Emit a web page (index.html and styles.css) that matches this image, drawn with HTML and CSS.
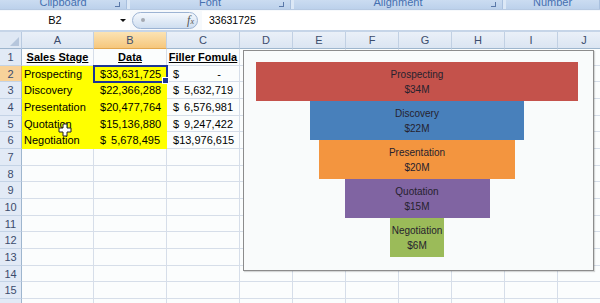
FILE: index.html
```html
<!DOCTYPE html>
<html lang="en">
<head>
	<meta charset="UTF-8">
	<title>sales funnel</title>
	<link rel="stylesheet" href="styles.css">
</head>
<body>

<div class="ribbon">
	<div class="group clip"><span class="label">Clipboard</span><i class="launch"></i></div>
	<div class="group font"><span class="label">Font</span><i class="launch"></i></div>
	<div class="group align"><span class="label">Alignment</span><i class="launch"></i></div>
	<div class="group number"><span class="label">Number</span></div>
</div>

<div class="formula-bar">
	<div class="name-box"><span class="ref">B2</span><span class="drop"></span></div>
	<div class="fx-pill"><span class="grip"></span><span class="fx">f<small>x</small></span></div>
	<div class="formula">33631725</div>
</div>

<div class="sheet">
	<div class="grid" id="grid">
		<div class="corner"></div>
		<div class="ch">A</div><div class="ch sel">B</div><div class="ch">C</div><div class="ch">D</div><div class="ch">E</div>
		<div class="ch">F</div><div class="ch">G</div><div class="ch">H</div><div class="ch">I</div><div class="ch">J</div>

		<div class="rh">1</div>
		<div class="c head">Sales Stage</div><div class="c head">Data</div><div class="c head">Filler Fomula</div>
		<div class="c"></div><div class="c"></div><div class="c"></div><div class="c"></div><div class="c"></div><div class="c"></div><div class="c"></div>

		<div class="rh sel">2</div>
		<div class="c hl">Prospecting</div>
		<div class="c hl acc active"><span>$</span><span>33,631,725</span></div>
		<div class="c acc"><span>$</span><span class="zero">-</span></div>
		<div class="c"></div><div class="c"></div><div class="c"></div><div class="c"></div><div class="c"></div><div class="c"></div><div class="c"></div>

		<div class="rh">3</div>
		<div class="c hl">Discovery</div>
		<div class="c hl acc"><span>$</span><span>22,366,288</span></div>
		<div class="c acc"><span>$</span><span>5,632,719</span></div>
		<div class="c"></div><div class="c"></div><div class="c"></div><div class="c"></div><div class="c"></div><div class="c"></div><div class="c"></div>

		<div class="rh">4</div>
		<div class="c hl">Presentation</div>
		<div class="c hl acc"><span>$</span><span>20,477,764</span></div>
		<div class="c acc"><span>$</span><span>6,576,981</span></div>
		<div class="c"></div><div class="c"></div><div class="c"></div><div class="c"></div><div class="c"></div><div class="c"></div><div class="c"></div>

		<div class="rh">5</div>
		<div class="c hl">Quotation</div>
		<div class="c hl acc"><span>$</span><span>15,136,880</span></div>
		<div class="c acc"><span>$</span><span>9,247,422</span></div>
		<div class="c"></div><div class="c"></div><div class="c"></div><div class="c"></div><div class="c"></div><div class="c"></div><div class="c"></div>

		<div class="rh">6</div>
		<div class="c hl">Negotiation</div>
		<div class="c hl acc"><span>$</span><span>5,678,495</span></div>
		<div class="c acc"><span>$</span><span>13,976,615</span></div>
		<div class="c"></div><div class="c"></div><div class="c"></div><div class="c"></div><div class="c"></div><div class="c"></div><div class="c"></div>
	</div>

	<div class="chart">
		<div class="bar red" style="width:322px">Prospecting<br>$34M</div>
		<div class="bar blue" style="width:214px">Discovery<br>$22M</div>
		<div class="bar orange" style="width:196px">Presentation<br>$20M</div>
		<div class="bar purple" style="width:145px">Quotation<br>$15M</div>
		<div class="bar green" style="width:54px">Negotiation<br>$6M</div>
	</div>

	<svg class="cursor" width="14" height="14" viewBox="0 0 14 14">
		<path d="M5 1 H9 V5 H13 V9 H9 V13 H5 V9 H1 V5 H5 Z" fill="#fff" stroke="#222" stroke-width="1"/>
	</svg>
</div>

<script>
// empty rows below the data
var grid = document.getElementById('grid');
for (var r = 7; r <= 16; r++) {
	var h = document.createElement('div');
	h.className = 'rh';
	h.innerHTML = r;
	grid.appendChild(h);
	for (var c = 0; c < 10; c++) {
		var d = document.createElement('div');
		d.className = 'c';
		grid.appendChild(d);
	}
}
</script>

</body>
</html>
```

FILE: styles.css
```css
* {
	box-sizing: border-box;
}
body {
	margin: 0;
	width: 600px;
	height: 303px;
	overflow: hidden;
	background: #fbfdfd;
	font-family: 'Liberation Sans', Arial, sans-serif;
	font-size: 11px;
	color: #000;
}

/* ribbon strip (cut off at the top) */
.ribbon {
	display: flex;
	height: 10px;
	overflow: hidden;
	background: #dce8f6;
	border-bottom: 1px solid #b6c9e2;
}
.group {
	display: flex;
	align-items: flex-end;
	justify-content: center;
	position: relative;
	height: 100%;
	background: linear-gradient(#cbdcf1, #bcd1eb);
	border-right: 1px solid #a9c0de;
	margin-right: 3px;
}
.group .label {
	line-height: 12px;
	margin-bottom: 1px;
	color: #4670b0;
}
.launch {
	position: absolute;
	right: 6px;
	bottom: 2px;
	width: 5px;
	height: 5px;
	border-right: 1px solid #5a78a8;
	border-bottom: 1px solid #5a78a8;
}
.clip { width: 127px; }
.font { width: 161px; }
.align { width: 209px; }
.number { flex: 1; margin-right: 0; }

/* formula bar */
.formula-bar {
	display: flex;
	align-items: center;
	height: 22px;
	background: #f6f9fc;
	border-bottom: 2px solid #c6d5e8;
}
.name-box {
	display: flex;
	align-items: center;
	width: 130px;
	height: 19px;
	background: #fff;
	position: relative;
}
.name-box .ref {
	flex: 1;
	text-align: center;
	padding-right: 10px;
	font-size: 11px;
}
.drop {
	width: 0;
	height: 0;
	margin-right: 4px;
	border-left: 3px solid transparent;
	border-right: 3px solid transparent;
	border-top: 3px solid #111;
}
.fx-pill {
	display: flex;
	align-items: center;
	justify-content: space-between;
	width: 66px;
	height: 17px;
	margin-left: 2px;
	padding: 0 3px 0 8px;
	border: 1px solid #9cb3d3;
	border-radius: 9px;
	background: linear-gradient(#f4f8fd, #cfdef0);
}
.grip {
	width: 4px;
	height: 4px;
	border-radius: 50%;
	background: #a4a9b2;
}
.fx {
	font-family: 'Liberation Serif', serif;
	font-style: italic;
	font-size: 12px;
	color: #555;
}
.fx small {
	font-size: 8px;
}
.formula {
	flex: 1;
	height: 19px;
	margin-left: 4px;
	padding-left: 7px;
	line-height: 19px;
	font-size: 10.5px;
	background: #fff;
}

/* worksheet */
.sheet {
	position: relative;
}
.grid {
	display: grid;
	grid-template-columns: 22px 72px 73px 73px repeat(7, 53px);
	grid-template-rows: 17px;
	grid-auto-rows: 16.67px;
}
.corner {
	background: #dfe8f4;
	border-right: 1px solid #b9cae0;
	border-bottom: 1px solid #9eb6ce;
	position: relative;
}
.corner::after {
	content: '';
	position: absolute;
	right: 2px;
	bottom: 2px;
	border-left: 9px solid transparent;
	border-bottom: 9px solid #b6c6dc;
}
.ch {
	text-align: center;
	line-height: 16px;
	color: #3c4c6c;
	background: linear-gradient(#eaf0f8, #dbe5f2);
	border-right: 1px solid #c1d0e3;
	border-bottom: 1px solid #9eb6ce;
}
.ch.sel {
	background: linear-gradient(#fbe3b4, #f6c77c);
	border-bottom-color: #e2a750;
}
.rh {
	text-align: center;
	line-height: 16px;
	color: #3c4c6c;
	background: #e2eaf6;
	border-right: 1px solid #9eb6ce;
	border-bottom: 1px solid #c4d3e6;
}
.rh.sel {
	background: #f8d29a;
	border-right-color: #e2a750;
}
.c {
	border-right: 1px solid #d6dee9;
	border-bottom: 1px solid #d6dee9;
	line-height: 16px;
	padding: 0 2px;
	white-space: nowrap;
}
.c.head {
	font-weight: bold;
	text-decoration: underline;
	text-align: center;
	padding: 0;
}
.c.hl {
	background: #ffff00;
	border-color: #ffff00;
}
.c.acc {
	display: flex;
	justify-content: space-between;
	padding: 0 6px;
}
.zero {
	padding-right: 12px;
}
.c.active {
	position: relative;
	outline: 2px solid #1d3596;
	outline-offset: -1px;
}
.c.active::after {
	content: '';
	position: absolute;
	right: -3px;
	bottom: -3px;
	width: 5px;
	height: 5px;
	background: #1d3596;
	border: 1px solid #fff;
}

/* funnel chart floating over the sheet */
.chart {
	position: absolute;
	left: 243px;
	top: 18px;
	width: 351px;
	height: 221px;
	padding: 11px 3px 0 0;
	display: flex;
	flex-direction: column;
	align-items: center;
	background: #f9fbfb;
	border: 1px solid #8c8c8c;
	box-shadow: 1px 1px 1px rgba(0, 0, 0, 0.15);
}
.bar {
	height: 39px;
	padding-top: 5px;
	text-align: center;
	font-size: 10px;
	line-height: 15px;
	color: #26222e;
	white-space: nowrap;
}
.red { background: #c4524b; }
.blue { background: #4880bb; }
.orange { background: #f3953f; }
.purple { background: #8064a2; }
.green { background: #9bbb59; }

.cursor {
	position: absolute;
	left: 58px;
	top: 91px;
}
```
